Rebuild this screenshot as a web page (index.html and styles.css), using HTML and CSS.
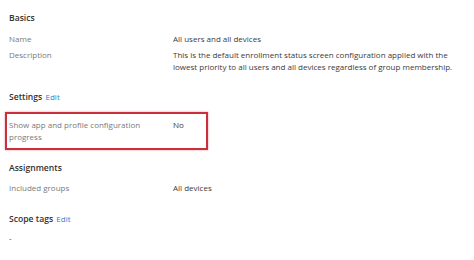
FILE: index.html
```html
<!DOCTYPE html>
<html>
<head>
<meta charset="utf-8">
<link rel="stylesheet" href="styles.css">
</head>
<body>
<div class="page">
  <section class="section basics">
    <h2 class="heading">Basics</h2>
    <div class="rows">
      <div class="row">
        <div class="label">Name</div>
        <div class="value">All users and all devices</div>
      </div>
      <div class="row">
        <div class="label">Description</div>
        <div class="value">This is the default enrollment status screen configuration applied with the lowest priority to all users and all devices regardless of group membership.</div>
      </div>
    </div>
  </section>

  <section class="section settings">
    <h2 class="heading">Settings <a class="edit">Edit</a></h2>
    <div class="highlight">
      <div class="row">
        <div class="label">Show app and profile configuration progress</div>
        <div class="value">No</div>
      </div>
    </div>
  </section>

  <section class="section assignments">
    <h2 class="heading">Assignments</h2>
    <div class="rows">
      <div class="row">
        <div class="label">Included groups</div>
        <div class="value">All devices</div>
      </div>
    </div>
  </section>

  <section class="section scope">
    <h2 class="heading">Scope tags <a class="edit">Edit</a></h2>
    <div class="dash">-</div>
  </section>
</div>
</body>
</html>
```
FILE: styles.css
```css
html, body {
  margin: 0;
  padding: 0;
  background: #ffffff;
}
.page {
  font-family: "Open Sans", "Noto Sans", sans-serif;
  font-size: 8px;
  line-height: 12px;
  color: #3b3a39;
  padding: 12px 0 0 9px;
  width: 456px;
}
.section {
  display: flex;
  flex-direction: column;
}
.heading {
  margin: 0;
  font-size: 8.6px;
  line-height: 12px;
  font-weight: 600;
  color: #323130;
}
.edit {
  font-weight: 400;
  color: #2a7fd0;
  font-size: 8px;
  margin-left: 1px;
}
.rows {
  display: flex;
  flex-direction: column;
  gap: 4px;
  margin-top: 9px;
}
.row {
  display: grid;
  grid-template-columns: 164px 1fr;
}
.label {
  color: #7a7978;
  padding-right: 24px;
}
.value {
  color: #3b3a39;
}
.settings {
  margin-top: 18px;
}
.highlight {
  margin: 9px 0 0 -4px;
  width: 197px;
  border: 2px solid #c9303c;
  box-shadow: 0 0 2px rgba(200, 48, 60, 0.5);
  padding: 5px 0 5px 2px;
}
.assignments {
  margin-top: 12px;
}
.assignments .rows {
  margin-top: 8px;
}
.scope {
  margin-top: 19px;
}
.dash {
  margin-top: 7px;
  color: #3b3a39;
}
```
